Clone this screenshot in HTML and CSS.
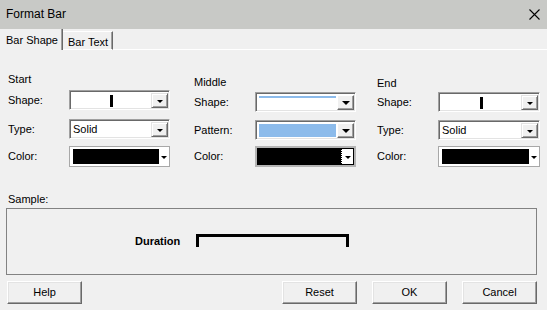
FILE: index.html
```
<!DOCTYPE html>
<html>
<head>
<meta charset="utf-8">
<link rel="stylesheet" href="styles.css">
</head>
<body>
<div class="win">
  <div class="titlebar">
    <span class="title">Format Bar</span>
    <svg class="close" width="11" height="11" viewBox="0 0 11 11"><path d="M0.5 0.5 L10.5 10.5 M10.5 0.5 L0.5 10.5" stroke="#000" stroke-width="1.1" fill="none"/></svg>
  </div>
  <div class="tabs">
    <div class="tab active">Bar Shape</div>
    <div class="tab">Bar Text</div>
    <div class="tabfill"></div>
  </div>
  <div class="panel">
    <div class="groups">
      <div class="group g-start">
        <div class="ghead">Start</div>
        <div class="row r1"><span class="lbl">Shape:</span>
          <div class="combo"><div class="val center"><span class="tick"></span></div><div class="btn"><span class="arr"></span></div></div>
        </div>
        <div class="row r2"><span class="lbl">Type:</span>
          <div class="combo"><div class="val text">Solid</div><div class="btn"><span class="arr"></span></div></div>
        </div>
        <div class="row r3"><span class="lbl">Color:</span>
          <div class="cbox"><div class="swatch"></div><div class="carr"><span class="arr"></span></div></div>
        </div>
      </div>
      <div class="group g-mid">
        <div class="ghead">Middle</div>
        <div class="row r1"><span class="lbl">Shape:</span>
          <div class="combo"><div class="val"><span class="bline"></span></div><div class="btn big"><span class="arr big"></span></div></div>
        </div>
        <div class="row r2"><span class="lbl">Pattern:</span>
          <div class="combo"><div class="val"><span class="bfill"></span></div><div class="btn big"><span class="arr big"></span></div></div>
        </div>
        <div class="row r3"><span class="lbl">Color:</span>
          <div class="cbox focus"><div class="frame"><div class="swatch"></div><div class="carr"><span class="arr"></span></div></div></div>
        </div>
      </div>
      <div class="group g-end">
        <div class="ghead">End</div>
        <div class="row r1"><span class="lbl">Shape:</span>
          <div class="combo wide"><div class="val center"><span class="tick"></span></div><div class="btn"><span class="arr"></span></div></div>
        </div>
        <div class="row r2"><span class="lbl">Type:</span>
          <div class="combo wide"><div class="val text">Solid</div><div class="btn"><span class="arr"></span></div></div>
        </div>
        <div class="row r3"><span class="lbl">Color:</span>
          <div class="cbox wide"><div class="swatch"></div><div class="carr"><span class="arr"></span></div></div>
        </div>
      </div>
    </div>
    <div class="sample-label">Sample:</div>
    <div class="sample">
      <span class="dur">Duration</span>
      <div class="bracket"></div>
    </div>
    <div class="buttons">
      <div class="pbtn">Help</div>
      <div class="spacer"></div>
      <div class="pbtn">Reset</div>
      <div class="pbtn">OK</div>
      <div class="pbtn">Cancel</div>
    </div>
  </div>
</div>
</body>
</html>
```
FILE: styles.css
```
html, body {
  margin: 0;
  padding: 0;
}
body {
  width: 547px;
  height: 310px;
  overflow: hidden;
  background: #f0f0f0;
  font-family: "Liberation Sans", Arial, sans-serif;
  font-size: 11px;
  color: #000;
}
.win {
  width: 547px;
  height: 310px;
  display: flex;
  flex-direction: column;
}
.titlebar {
  height: 29px;
  background: #c8c9c6;
  display: flex;
  align-items: center;
  padding-left: 6px;
  padding-right: 7px;
  box-sizing: border-box;
}
.title {
  font-size: 12px;
  flex: 1;
  margin-top: -1px;
}
.close {
  display: block;
  margin-top: -1px;
}
.tabs {
  height: 21px;
  display: flex;
  align-items: flex-end;
}
.tab {
  box-sizing: border-box;
  height: 19px;
  width: 50px;
  padding-left: 5px;
  padding-top: 4px;
  border-top: 1px solid #ffffff;
  border-right: 1px solid #696969;
  border-bottom: 1px solid #ffffff;
  box-shadow: inset -1px 0 #a0a0a0;
  line-height: 13px;
}
.tab.active {
  width: 63px;
  height: 21px;
  padding-left: 6px;
  padding-top: 5px;
  border-top: none;
  border-bottom: none;
}
.tabfill {
  flex: 1;
  height: 1px;
  background: #ffffff;
}
.panel {
  flex: 1;
  display: flex;
  flex-direction: column;
}
.groups {
  display: flex;
  padding-left: 8px;
}
.group {
  display: flex;
  flex-direction: column;
  width: 162px;
}
.g-start { margin-top: 23px; }
.g-mid { margin-left: 24px; margin-top: 26px; }
.g-end { margin-left: 21px; margin-top: 27px; width: 163px; }
.ghead {
  line-height: 13px;
  height: 13px;
}
.g-start .ghead { margin-bottom: 4px; }
.g-mid .ghead { margin-bottom: 3px; }
.g-end .ghead { margin-bottom: 2px; }
.row {
  display: flex;
  align-items: center;
  height: 20px;
}
.g-start .r2 { margin-top: 9px; }
.g-start .r3 { margin-top: 7px; height: 21px; }
.g-mid .r2, .g-end .r2 { margin-top: 8px; }
.g-mid .r3, .g-end .r3 { margin-top: 6px; height: 21px; }
.lbl {
  width: 61px;
  line-height: 13px;
}
.combo {
  box-sizing: border-box;
  width: 101px;
  height: 20px;
  border: 1px solid;
  border-color: #a0a0a0 #ffffff #ffffff #a0a0a0;
  box-shadow: inset 1px 1px #696969, inset -1px -1px #e3e3e3;
  background: #ffffff;
  display: flex;
  padding: 2px 1px 1px 2px;
}
.combo.wide { width: 102px; }
.val {
  flex: 1;
  display: flex;
  align-items: center;
  position: relative;
}
.val.center { justify-content: center; }
.val.text { padding-left: 1px; line-height: 13px; }
.tick {
  width: 3px;
  height: 12px;
  background: #000;
}
.bline {
  position: absolute;
  left: 1px;
  right: 1px;
  top: 1px;
  height: 2px;
  background: #8cbbeb;
}
.bfill {
  position: absolute;
  left: 1px;
  right: 1px;
  top: 1px;
  bottom: 1px;
  background: #8cbbeb;
}
.btn {
  box-sizing: border-box;
  width: 17px;
  background: #f0f0f0;
  border: 1px solid;
  border-color: #e3e3e3 #696969 #696969 #e3e3e3;
  box-shadow: inset 1px 1px #ffffff, inset -1px -1px #a0a0a0;
  display: flex;
  align-items: center;
  justify-content: center;
}
.btn.big {
  background: #f0f0f0;
  border-color: #ffffff #696969 #696969 #ffffff;
  box-shadow: inset -1px -1px #a0a0a0;
}
.arr {
  width: 0;
  height: 0;
  border-left: 3px solid transparent;
  border-right: 3px solid transparent;
  border-top: 3px solid #000;
  margin-top: 1px;
}
.arr.big {
  border-left-width: 4px;
  border-right-width: 4px;
  border-top-width: 4px;
}
.cbox {
  box-sizing: border-box;
  width: 101px;
  height: 21px;
  border: 1px solid #a8a8a8;
  background: #ffffff;
  display: flex;
  padding: 2px 0 2px 3px;
}
.cbox.wide { width: 102px; }
.swatch {
  flex: 1;
  background: #000;
}
.carr {
  width: 10px;
  display: flex;
  align-items: center;
  justify-content: center;
}
.cbox.focus {
  border: 2px solid #b4b4b4;
  padding: 0;
}
.frame {
  flex: 1;
  display: flex;
  border: 1px dotted #000;
  background: #000;
}
.frame .swatch { margin: 1px 0 1px 1px; }
.frame .carr {
  width: 12px;
  background: #ffffff;
  border-left: 1px dotted #000;
  box-sizing: border-box;
}
.sample-label {
  margin-top: 26px;
  padding-left: 8px;
  line-height: 13px;
}
.sample {
  box-sizing: border-box;
  margin-top: 2px;
  margin-left: 6px;
  width: 531px;
  height: 67px;
  border: 1px solid #828282;
  display: flex;
  align-items: flex-start;
  padding-left: 128px;
  padding-top: 25px;
}
.dur {
  font-weight: bold;
  line-height: 13px;
  margin-top: 1px;
}
.bracket {
  box-sizing: border-box;
  margin-left: 16px;
  width: 153px;
  height: 13px;
  border-top: 3px solid #000;
  border-left: 3px solid #000;
  border-right: 3px solid #000;
}
.buttons {
  display: flex;
  margin-top: 6px;
  padding-left: 7px;
  width: 537px;
  box-sizing: border-box;
  gap: 15px;
}
.spacer { flex: 1; }
.pbtn {
  box-sizing: border-box;
  width: 75px;
  height: 23px;
  background: #f0f0f0;
  border: 1px solid;
  border-color: #ffffff #696969 #696969 #ffffff;
  box-shadow: inset -1px -1px #a0a0a0, inset 1px 1px #e3e3e3;
  display: flex;
  align-items: center;
  justify-content: center;
  line-height: 13px;
}
```
